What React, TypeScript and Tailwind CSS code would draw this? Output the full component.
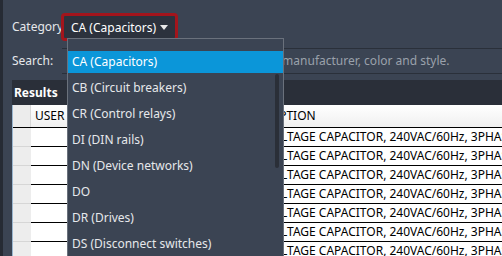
import React from 'react';

const categories = [
  'CA (Capacitors)',
  'CB (Circuit breakers)',
  'CR (Control relays)',
  'DI (DIN rails)',
  'DN (Device networks)',
  'DO',
  'DR (Drives)',
  'DS (Disconnect switches)',
  'FU (Fuses)',
];

const rows = Array.from({ length: 7 }, () => 'LOW VOLTAGE CAPACITOR, 240VAC/60Hz, 3PHASE, 5KVAR');

export default function App() {
  return (
    <div
      className="relative w-[502px] h-[256px] overflow-hidden bg-[#3b4453] text-[12px] text-[#e6e8eb] flex"
      style={{ fontFamily: '"Noto Sans", "Open Sans", sans-serif' }}
    >
      {/* left edge strip */}
      <div className="w-[3px] bg-[#262b34] shrink-0" />
      <div className="flex-1 flex flex-col pl-[9px]">
        {/* Category row */}
        <div className="flex items-center h-[28px] mt-[13px]">
          <span className="w-[49px]">Category:</span>
          <div className="h-[28px] w-[117px] rounded-[4px] border-[3px] border-[#a3151c] bg-[#2c323d] flex items-center pl-[7px] pr-[7px] pt-[1px]">
            <span className="flex-1 text-white">CA (Capacitors)</span>
            <svg width="8" height="5" viewBox="0 0 8 5">
              <path d="M0 0h8L4 5z" fill="#e8e8e8" />
            </svg>
          </div>
        </div>

        {/* Search row */}
        <div className="flex items-center h-[26px] mt-[7px]">
          <span className="w-[50px]">Search:</span>
          <div className="flex-1 h-[26px] border-y border-[#2a303a] bg-[#3b4453] flex items-center pl-[17px] whitespace-nowrap overflow-hidden">
            <span className="text-[#9aa1ab]">Search by part number, description, manufacturer, color and style.</span>
          </div>
        </div>

        {/* Results header */}
        <div className="mt-[6px] h-[25px] bg-[#2a2f39] flex items-center pl-[2px] font-bold text-white">
          Results
        </div>

        {/* Table */}
        <div className="flex-1 bg-white border-l border-[#9ab6cf] text-black overflow-hidden">
          <div className="flex h-[23px] bg-gradient-to-b from-white to-[#f0f0f0] border-b border-black">
            <div className="w-[18px] bg-[#ececec] border-r border-[#d8d8d8]" />
            <div className="w-[140px] flex items-center pl-[4px] border-r border-[#d8d8d8]">USER</div>
            <div className="flex-1 flex items-center pl-[67px] whitespace-nowrap">DESCRIPTION</div>
          </div>
          {rows.map((r, i) => (
            <div key={i} className="flex h-[19px]">
              <div className="w-[18px] bg-[#ededed] border-b border-[#d6d6d6]" />
              <div className="flex-1 flex border-b border-black">
                <div className="w-[140px]" />
                <div className="flex-1 flex items-center pl-[64px] whitespace-nowrap">{r}</div>
              </div>
            </div>
          ))}
        </div>
      </div>

      {/* Dropdown list */}
      <div className="absolute left-[67px] top-[38px] w-[217px] h-[240px] bg-[#3b4453] border border-[#6a717c] pt-[10px]">
        {categories.map((c, i) => (
          <div key={c} className="h-[26px] py-[2px]">
            <div className={`h-full flex items-center pl-[4px] ${i === 0 ? 'bg-[#0b96d9] text-white' : 'text-[#e6e8eb]'}`}>
              {c}
            </div>
          </div>
        ))}
        <div className="absolute right-[4px] top-[35px] w-[4px] h-[94px] rounded-full bg-[#2a2f38]" />
      </div>
    </div>
  );
}
